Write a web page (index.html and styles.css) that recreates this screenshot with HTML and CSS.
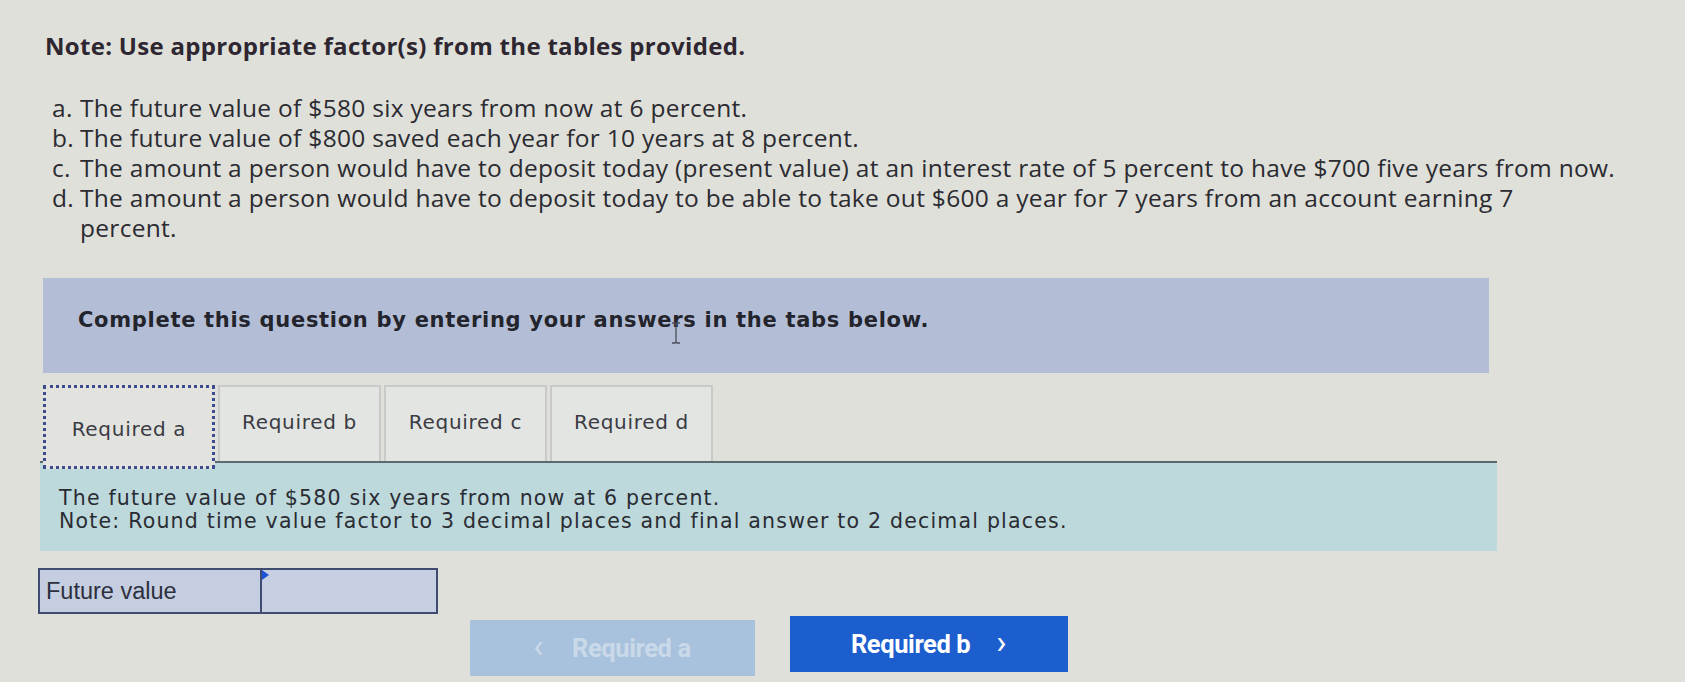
FILE: index.html
```html
<!DOCTYPE html>
<html lang="en">
<head>
<meta charset="utf-8">
<title>Time value question</title>
<link rel="stylesheet" href="styles.css">
</head>
<body>
<div class="page">
  <h1 class="note">Note: Use appropriate factor(s) from the tables provided.</h1>
  <ol class="items">
    <li><span class="mk">a.</span><span class="tx">The future value of $580 six years from now at 6 percent.</span></li>
    <li><span class="mk">b.</span><span class="tx">The future value of $800 saved each year for 10 years at 8 percent.</span></li>
    <li><span class="mk">c.</span><span class="tx">The amount a person would have to deposit today (present value) at an interest rate of 5 percent to have $700 five years from now.</span></li>
    <li><span class="mk">d.</span><span class="tx">The amount a person would have to deposit today to be able to take out $600 a year for 7 years from an account earning 7<br>percent.</span></li>
  </ol>

  <div class="instruct">Complete this question by entering your answers in the tabs below.
    <svg class="ibeam" width="10" height="22" viewBox="0 0 10 22" aria-hidden="true">
      <path d="M1 1h3l1 1 1-1h3M5 2v18M1 21h3l1-1 1 1h3" fill="none" stroke="#4a4e5a" stroke-width="1.3"/>
    </svg>
  </div>

  <div class="tabs">
    <div class="tab active">Required a</div>
    <div class="tab">Required b</div>
    <div class="tab">Required c</div>
    <div class="tab">Required d</div>
  </div>

  <div class="panel">
    <p>The future value of $580 six years from now at 6 percent.</p>
    <p>Note: Round time value factor to 3 decimal places and final answer to 2 decimal places.</p>
  </div>

  <div class="answer">
    <div class="label">Future value</div>
    <div class="input"><span class="flag"></span></div>
  </div>

  <div class="nav">
    <div class="btn prev"><span class="chev">&#x2039;</span> Required a</div>
    <div class="btn next">Required b <span class="chev">&#x203A;</span></div>
  </div>
</div>
</body>
</html>
```
FILE: styles.css
```css
html, body {
  margin: 0;
  padding: 0;
  background: #dfe0da;
}
body {
  color: #2b2b31;
  font-family: "Open Sans", "Liberation Sans", sans-serif;
}
.page {
  padding: 31px 0 0 42px;
}
.note {
  margin: 0 0 0 3px;
  font-size: 24px;
  line-height: 30px;
  font-weight: 700;
  letter-spacing: 0.3px;
  color: #2e2630;
}
.items {
  list-style: none;
  margin: 32px 0 0 10px;
  padding: 0;
  font-size: 24.5px;
  line-height: 30px;
  letter-spacing: 0.3px;
}
.items li {
  display: flex;
}
.items .mk {
  width: 28px;
  flex: none;
}
.instruct {
  position: relative;
  margin: 35px 0 0 1px;
  width: 1446px;
  box-sizing: border-box;
  height: 95px;
  background: #b3bed6;
  padding: 29px 35px 0;
  font-family: "DejaVu Sans", sans-serif;
  font-weight: 700;
  font-size: 21px;
  line-height: 26px;
  letter-spacing: 0.7px;
  color: #23242c;
}
.ibeam {
  position: absolute;
  left: 628px;
  top: 44px;
}
.tabs {
  display: flex;
  gap: 3px;
  margin: 12px 0 0 1px;
  height: 76px;
  position: relative;
  z-index: 1;
}
.tab {
  width: 163px;
  box-sizing: border-box;
  border: 2px solid #c8cac8;
  border-bottom: none;
  background: #e3e5e2;
  display: flex;
  align-items: center;
  justify-content: center;
  padding-bottom: 4px;
  font-family: "DejaVu Sans", sans-serif;
  font-size: 20px;
  letter-spacing: 0.7px;
  color: #3a3b44;
}
.tab.active {
  width: 172px;
  height: 84px;
  border: 3px dotted #3d4a8c;
  background: #e2e3df;
  padding-bottom: 0;
  padding-top: 4px;
}
.panel {
  margin-left: -2px;
  width: 1457px;
  box-sizing: border-box;
  background: #bed9dc;
  border-top: 2px solid #5b6a6e;
  padding: 24px 19px 18px;
  font-family: "DejaVu Sans", sans-serif;
  font-size: 20.5px;
  line-height: 23px;
  letter-spacing: 1.2px;
  color: #2a2c33;
}
.panel p {
  margin: 0;
}
.answer {
  display: flex;
  margin: 17px 0 0 -4px;
  width: 400px;
  height: 46px;
  box-sizing: border-box;
  border: 2px solid #3f4c72;
  background: #c5cde0;
}
.answer .label {
  width: 222px;
  box-sizing: border-box;
  border-right: 2px solid #3f4c72;
  padding: 8px 0 0 6px;
  font-family: "Liberation Sans", Arial, sans-serif;
  font-size: 23.5px;
  color: #2c2f3e;
}
.answer .input {
  flex: 1;
  position: relative;
  background: #c7cfe2;
}
.flag {
  position: absolute;
  left: 0;
  top: 0;
  width: 0;
  height: 0;
  border-top: 5px solid transparent;
  border-bottom: 5px solid transparent;
  border-left: 7px solid #1e55d8;
}
.nav {
  display: flex;
  justify-content: center;
  gap: 35px;
  width: 1457px;
  margin: 4px 0 0 -2px;
}
.btn {
  height: 56px;
  display: flex;
  align-items: center;
  justify-content: center;
  font-family: "Roboto", "Liberation Sans", sans-serif;
  font-weight: 700;
  font-size: 25.5px;
  letter-spacing: -0.4px;
}
.btn .chev {
  font-size: 34px;
  font-weight: 400;
  line-height: 1;
  margin-top: -5px;
}
.prev {
  width: 285px;
  background: #a8c1dc;
  color: #cad9e9;
  margin-top: 2px;
}
.prev .chev {
  margin-right: 29px;
}
.next {
  width: 278px;
  background: #1d5ecf;
  color: #ffffff;
  margin-top: -2px;
}
.next .chev {
  margin-left: 26px;
}
```
